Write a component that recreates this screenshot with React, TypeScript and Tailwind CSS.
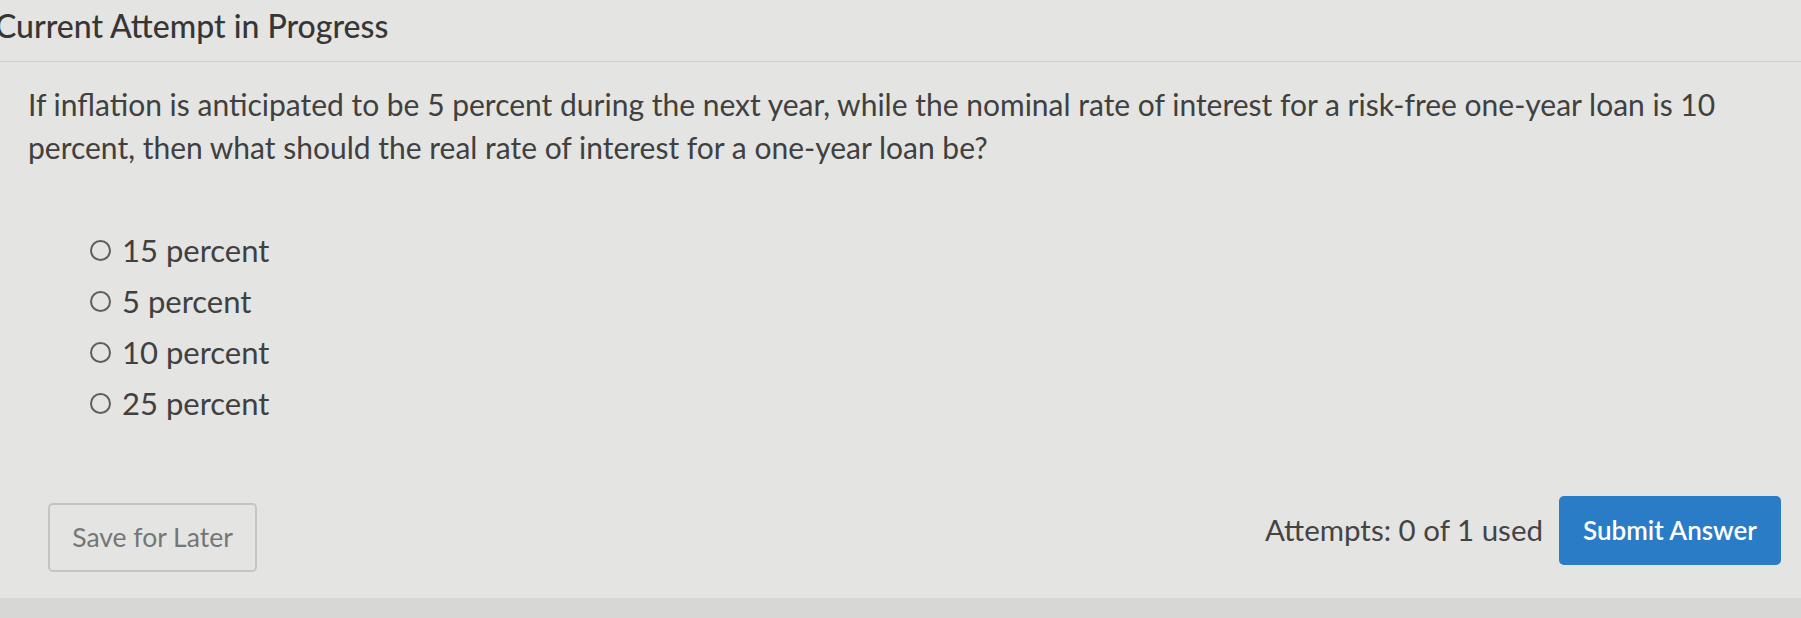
import React, { useState } from 'react';

const options = ['15 percent', '5 percent', '10 percent', '25 percent'];

const App: React.FC = () => {
  const [selected, setSelected] = useState<number | null>(null);

  return (
    <div className="w-full h-[618px] overflow-hidden bg-[#e4e4e2] flex flex-col font-['Lato','Liberation_Sans',sans-serif] text-[#3c3c3c]">
      {/* Header */}
      <div className="h-[62px] shrink-0 border-b border-[#cfcfcc]">
        <h1 className="-ml-[5px] pt-[4px] text-[32px] leading-[44px] font-medium text-[#363636] whitespace-nowrap">
          Current Attempt in Progress
        </h1>
      </div>

      {/* Question */}
      <div className="flex-1 flex flex-col">
        <p className="pl-[28px] pr-[40px] pt-[21px] text-[30px] leading-[43px] text-[#404040]">
          If inflation is anticipated to be 5 percent during the next year, while the nominal rate of interest for a risk-free one-year loan is 10 percent, then what should the real rate of interest for a one-year loan be?
        </p>

        <div className="mt-[56px] pl-[90px] flex flex-col">
          {options.map((opt, i) => (
            <label key={i} className="h-[51px] flex items-center gap-[11px] cursor-pointer">
              <span className="w-[21px] h-[21px] rounded-full border-2 border-[#5e5e5e] flex items-center justify-center">
                {selected === i && <span className="w-[10px] h-[10px] rounded-full bg-[#4a4a4a]" />}
              </span>
              <input
                type="radio"
                name="answer"
                className="hidden"
                checked={selected === i}
                onChange={() => setSelected(i)}
              />
              <span className="text-[31px] leading-[51px] text-[#404040]">{opt}</span>
            </label>
          ))}
        </div>

        {/* Actions */}
        <div className="mt-auto mb-[26px] pl-[48px] pr-[20px] flex items-start justify-between">
          <button className="mt-[7px] w-[209px] h-[69px] rounded-[5px] border-2 border-[#c4c4c2] text-[26.5px] text-[#767676]">
            Save for Later
          </button>
          <div className="flex items-center gap-[16px]">
            <span className="text-[29.5px] text-[#444444]">Attempts: 0 of 1 used</span>
            <button className="w-[222px] h-[69px] rounded-[5px] bg-[#2a7cc7] text-[26px] font-semibold text-white">
              Submit Answer
            </button>
          </div>
        </div>
      </div>

      {/* Bottom strip */}
      <div className="h-[20px] shrink-0 bg-[#d7d7d5]" />
    </div>
  );
};

export default App;
